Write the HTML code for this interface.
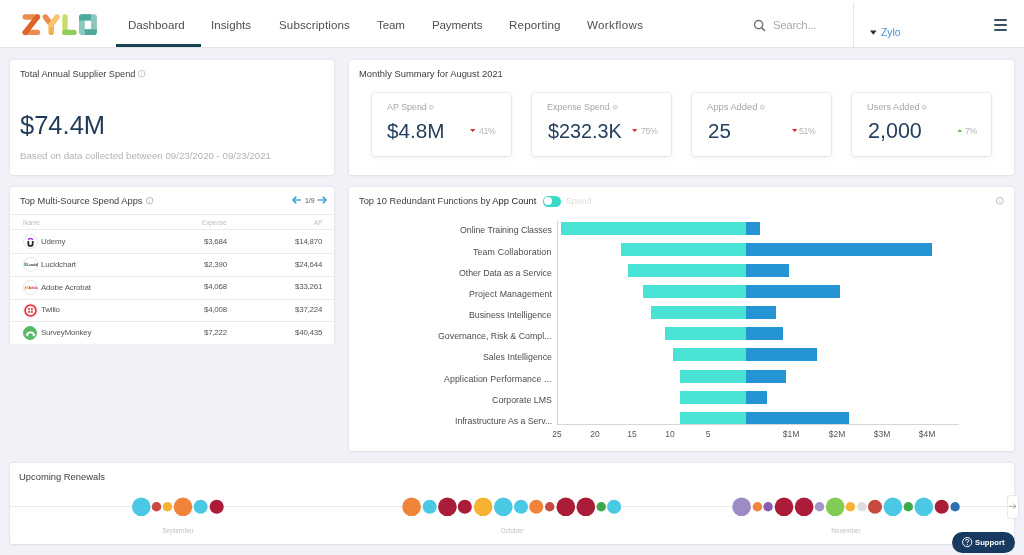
<!DOCTYPE html>
<html><head><meta charset="utf-8"><style>
html,body{margin:0;padding:0;width:1024px;height:555px;overflow:hidden;background:#f0f2f7;position:relative}
body{font-family:"Liberation Sans",sans-serif}
.t{position:absolute;white-space:nowrap;line-height:1;will-change:transform}
</style></head><body>
<div style="position:absolute;left:0px;top:0px;width:1024px;height:47px;background:#fff"></div>
<div style="position:absolute;left:0px;top:47px;width:1024px;height:1px;background:#e2e3e6"></div>
<div style="position:absolute;left:0px;top:48px;width:1024px;height:1px;background:#eceef2"></div>
<svg style="position:absolute;left:0;top:0" width="110" height="47" viewBox="0 0 110 47">
<g stroke-linecap="round" stroke-width="5.4" fill="none">
<line x1="25.3" y1="17" x2="37.4" y2="17" stroke="#e98c4e"/>
<line x1="25.3" y1="32.4" x2="37.4" y2="32.4" stroke="#e98c4e"/>
<line x1="37.4" y1="17" x2="25.3" y2="32.4" stroke="#de6428"/>
<line x1="45.4" y1="17" x2="51.2" y2="24.6" stroke="#e98c4e"/>
<line x1="51.2" y1="24.6" x2="51.2" y2="32.4" stroke="#f1b34c"/>
<line x1="57" y1="17" x2="51.2" y2="24.6" stroke="#f5c56d"/>
<line x1="65" y1="17" x2="65" y2="32.4" stroke="#cadd6c"/>
<line x1="65" y1="32.4" x2="74" y2="32.4" stroke="#8fcd5c"/>
</g>
<path fill-rule="evenodd" d="M79 17.4 Q79 14.3 82.1 14.3 L93.8 14.3 Q96.9 14.3 96.9 17.4 L96.9 31.9 Q96.9 35 93.8 35 L82.1 35 Q79 35 79 31.9 Z M84.8 20.5 L84.8 29.2 L91.1 29.2 L91.1 20.5 Z" fill="#8cc7bd"/>
<path d="M79 17.4 Q79 14.3 82.1 14.3 L91.1 14.3 L91.1 20.5 L79 20.5 Z" fill="#4eaa9e"/>

<path d="M84.8 29.2 L96.9 29.2 L96.9 31.9 Q96.9 35 93.8 35 L84.8 35 Z" fill="#4eaa9e"/>

</svg>
<div class="t" style="left:128.10px;top:19.24px;font-size:11.6px;color:#4f4f4f;font-weight:400;letter-spacing:0px">Dashboard</div>
<div class="t" style="left:211.40px;top:19.24px;font-size:11.6px;color:#4f4f4f;font-weight:400;letter-spacing:0.03px">Insights</div>
<div class="t" style="left:279.20px;top:19.24px;font-size:11.6px;color:#4f4f4f;font-weight:400;letter-spacing:0.1px">Subscriptions</div>
<div class="t" style="left:377.00px;top:19.24px;font-size:11.6px;color:#4f4f4f;font-weight:400;letter-spacing:-0.17px">Team</div>
<div class="t" style="left:431.70px;top:19.24px;font-size:11.6px;color:#4f4f4f;font-weight:400;letter-spacing:-0.16px">Payments</div>
<div class="t" style="left:509.00px;top:19.24px;font-size:11.6px;color:#4f4f4f;font-weight:400;letter-spacing:0.16px">Reporting</div>
<div class="t" style="left:587.10px;top:19.24px;font-size:11.6px;color:#4f4f4f;font-weight:400;letter-spacing:0.34px">Workflows</div>
<div style="position:absolute;left:116px;top:44px;width:85px;height:3px;background:#164452"></div>
<svg style="position:absolute;left:750px;top:17px" width="20" height="18" viewBox="0 0 20 18">
<circle cx="8.6" cy="7.6" r="4.1" fill="none" stroke="#707070" stroke-width="1.4"/>
<line x1="11.6" y1="10.6" x2="14.4" y2="13.4" stroke="#707070" stroke-width="1.5" stroke-linecap="round"/>
</svg>
<div class="t" style="left:772.70px;top:20.31px;font-size:11.4px;color:#a9a9a9;font-weight:400;letter-spacing:-0.28px">Search...</div>
<div style="position:absolute;left:852.5px;top:2px;width:1px;height:45px;background:#e6e6e9"></div>
<svg style="position:absolute;left:869px;top:30px" width="9" height="6" viewBox="0 0 9 6"><path d="M1 0.6 L7.6 0.6 L4.3 4.8 Z" fill="#1e3446"/></svg>
<div class="t" style="left:880.80px;top:27.76px;font-size:10.4px;color:#4692d2;font-weight:400;">Zylo</div>
<div style="position:absolute;left:993.6px;top:19.4px;width:13.3px;height:1.8px;background:#3a5163;border-radius:1px"></div>
<div style="position:absolute;left:993.6px;top:24.4px;width:13.3px;height:1.8px;background:#3a5163;border-radius:1px"></div>
<div style="position:absolute;left:993.6px;top:29.4px;width:13.3px;height:1.8px;background:#3a5163;border-radius:1px"></div>
<div style="position:absolute;left:10px;top:60px;width:324px;height:115px;background:#fff;border-radius:2px;box-shadow:0 0 1.5px rgba(0,0,0,0.16), 0 1px 3px rgba(0,0,0,0.05)"></div>
<div style="position:absolute;left:349px;top:60px;width:665px;height:115px;background:#fff;border-radius:2px;box-shadow:0 0 1.5px rgba(0,0,0,0.16), 0 1px 3px rgba(0,0,0,0.05)"></div>
<div style="position:absolute;left:10px;top:187px;width:324px;height:156.6px;background:#fff;border-radius:2px;box-shadow:0 0 1.5px rgba(0,0,0,0.16), 0 1px 3px rgba(0,0,0,0.05);border-radius:2px 2px 0 0"></div>
<div style="position:absolute;left:9px;top:343.6px;width:327px;height:4px;background:#f0f2f7"></div>
<div style="position:absolute;left:349px;top:187px;width:665px;height:264px;background:#fff;border-radius:2px;box-shadow:0 0 1.5px rgba(0,0,0,0.16), 0 1px 3px rgba(0,0,0,0.05)"></div>
<div style="position:absolute;left:10px;top:462.6px;width:1004px;height:81.6px;background:#fff;border-radius:2px;box-shadow:0 0 1.5px rgba(0,0,0,0.16), 0 1px 3px rgba(0,0,0,0.05)"></div>
<div class="t" style="left:20.00px;top:69.78px;font-size:9.2px;color:#3d3d3d;font-weight:400;">Total Annual Supplier Spend</div>
<svg style="position:absolute;left:137.20px;top:69.30px" width="9.40" height="9.40" viewBox="0 0 9.40 9.40"><circle cx="4.70" cy="4.70" r="3.30" fill="none" stroke="#b5b5b5" stroke-width="0.8"/><line x1="4.70" y1="4.52" x2="4.70" y2="6.55" stroke="#b5b5b5" stroke-width="0.8" opacity="0.6"/><circle cx="4.70" cy="3.29" r="0.44" fill="#b5b5b5" opacity="0.6"/></svg>
<div class="t" style="left:20.40px;top:112.92px;font-size:25.5px;color:#1f3a56;font-weight:400;">$74.4M</div>
<div class="t" style="left:19.60px;top:151.16px;font-size:9.7px;color:#b3b3b3;font-weight:400;">Based on data collected between 09/23/2020 - 09/23/2021</div>
<div class="t" style="left:358.90px;top:69.41px;font-size:9.4px;color:#3d3d3d;font-weight:400;">Monthly Summary for August 2021</div>
<div style="position:absolute;left:372.2px;top:93px;width:138.6px;height:63.2px;background:#fff;border-radius:2.5px;box-shadow:0 0 2px rgba(0,0,0,0.2), 0 1px 4px rgba(0,0,0,0.08)"></div>
<div class="t" style="left:386.80px;top:103.44px;font-size:8.9px;color:#a6a6a6;font-weight:400;">AP Spend</div>
<div style="position:absolute;left:532.2px;top:93px;width:138.6px;height:63.2px;background:#fff;border-radius:2.5px;box-shadow:0 0 2px rgba(0,0,0,0.2), 0 1px 4px rgba(0,0,0,0.08)"></div>
<div class="t" style="left:546.80px;top:103.44px;font-size:8.9px;color:#a6a6a6;font-weight:400;">Expense Spend</div>
<div style="position:absolute;left:692.2px;top:93px;width:138.6px;height:63.2px;background:#fff;border-radius:2.5px;box-shadow:0 0 2px rgba(0,0,0,0.2), 0 1px 4px rgba(0,0,0,0.08)"></div>
<div class="t" style="left:706.80px;top:103.05px;font-size:9.35px;color:#a6a6a6;font-weight:400;">Apps Added</div>
<div style="position:absolute;left:852.2px;top:93px;width:138.6px;height:63.2px;background:#fff;border-radius:2.5px;box-shadow:0 0 2px rgba(0,0,0,0.2), 0 1px 4px rgba(0,0,0,0.08)"></div>
<div class="t" style="left:866.80px;top:103.18px;font-size:9.2px;color:#a6a6a6;font-weight:400;">Users Added</div>
<svg style="position:absolute;left:427.60px;top:104.10px" width="6.60" height="6.60" viewBox="0 0 6.60 6.60"><circle cx="3.30" cy="3.30" r="1.95" fill="none" stroke="#b0b0b0" stroke-width="0.7"/><line x1="3.30" y1="3.18" x2="3.30" y2="4.45" stroke="#b0b0b0" stroke-width="0.7" opacity="0.6"/><circle cx="3.30" cy="2.43" r="0.39" fill="#b0b0b0" opacity="0.6"/></svg>
<svg style="position:absolute;left:612.20px;top:104.10px" width="6.60" height="6.60" viewBox="0 0 6.60 6.60"><circle cx="3.30" cy="3.30" r="1.95" fill="none" stroke="#b0b0b0" stroke-width="0.7"/><line x1="3.30" y1="3.18" x2="3.30" y2="4.45" stroke="#b0b0b0" stroke-width="0.7" opacity="0.6"/><circle cx="3.30" cy="2.43" r="0.39" fill="#b0b0b0" opacity="0.6"/></svg>
<svg style="position:absolute;left:759.20px;top:104.10px" width="6.60" height="6.60" viewBox="0 0 6.60 6.60"><circle cx="3.30" cy="3.30" r="1.95" fill="none" stroke="#b0b0b0" stroke-width="0.7"/><line x1="3.30" y1="3.18" x2="3.30" y2="4.45" stroke="#b0b0b0" stroke-width="0.7" opacity="0.6"/><circle cx="3.30" cy="2.43" r="0.39" fill="#b0b0b0" opacity="0.6"/></svg>
<svg style="position:absolute;left:921.20px;top:104.10px" width="6.60" height="6.60" viewBox="0 0 6.60 6.60"><circle cx="3.30" cy="3.30" r="1.95" fill="none" stroke="#b0b0b0" stroke-width="0.7"/><line x1="3.30" y1="3.18" x2="3.30" y2="4.45" stroke="#b0b0b0" stroke-width="0.7" opacity="0.6"/><circle cx="3.30" cy="2.43" r="0.39" fill="#b0b0b0" opacity="0.6"/></svg>
<div class="t" style="left:387.30px;top:120.81px;font-size:20.7px;color:#24405e;font-weight:400;">$4.8M</div>
<div class="t" style="left:548.10px;top:121.57px;font-size:19.8px;color:#24405e;font-weight:400;">$232.3K</div>
<div class="t" style="left:707.90px;top:120.98px;font-size:20.5px;color:#24405e;font-weight:400;">25</div>
<div class="t" style="left:868.10px;top:121.32px;font-size:21.5px;color:#24405e;font-weight:400;">2,000</div>
<svg style="position:absolute;left:470.1px;top:128.8px" width="5.4" height="3.1" viewBox="0 0 5.4 3.1"><path d="M0 0 L5.4 0 L2.7 3.1 Z" fill="#d0343a"/></svg>
<svg style="position:absolute;left:632.3px;top:128.8px" width="5.4" height="3.1" viewBox="0 0 5.4 3.1"><path d="M0 0 L5.4 0 L2.7 3.1 Z" fill="#d0343a"/></svg>
<svg style="position:absolute;left:791.6px;top:128.8px" width="5.4" height="3.1" viewBox="0 0 5.4 3.1"><path d="M0 0 L5.4 0 L2.7 3.1 Z" fill="#d0343a"/></svg>
<svg style="position:absolute;left:956.6px;top:128.9px" width="5.6" height="3.2" viewBox="0 0 5.6 3.2"><path d="M0 3.2 L5.6 3.2 L2.8 0 Z" fill="#6cc84a"/></svg>
<div class="t" style="left:478.60px;top:127.20px;font-size:8.7px;color:#b4b4b4;font-weight:400;letter-spacing:-0.35px">41%</div>
<div class="t" style="left:641.00px;top:127.20px;font-size:8.7px;color:#b4b4b4;font-weight:400;letter-spacing:-0.35px">75%</div>
<div class="t" style="left:799.00px;top:127.20px;font-size:8.7px;color:#b4b4b4;font-weight:400;letter-spacing:-0.35px">51%</div>
<div class="t" style="left:964.90px;top:127.20px;font-size:8.7px;color:#b4b4b4;font-weight:400;letter-spacing:-0.3px">7%</div>
<div class="t" style="left:19.70px;top:196.79px;font-size:9.3px;color:#3d3d3d;font-weight:400;">Top Multi-Source Spend Apps</div>
<svg style="position:absolute;left:144.50px;top:196.40px" width="9.40" height="9.40" viewBox="0 0 9.40 9.40"><circle cx="4.70" cy="4.70" r="3.30" fill="none" stroke="#a5a5a5" stroke-width="0.8"/><line x1="4.70" y1="4.52" x2="4.70" y2="6.55" stroke="#a5a5a5" stroke-width="0.8" opacity="0.6"/><circle cx="4.70" cy="3.29" r="0.44" fill="#a5a5a5" opacity="0.6"/></svg>
<div style="position:absolute;left:10px;top:214px;width:324px;height:1px;background:#ececef"></div>
<div style="position:absolute;left:10px;top:229px;width:324px;height:1px;background:#ececef"></div>
<div style="position:absolute;left:10px;top:252.5px;width:324px;height:1px;background:#ececef"></div>
<div style="position:absolute;left:10px;top:275.5px;width:324px;height:1px;background:#ececef"></div>
<div style="position:absolute;left:10px;top:298.5px;width:324px;height:1px;background:#ececef"></div>
<div style="position:absolute;left:10px;top:321.3px;width:324px;height:1px;background:#ececef"></div>
<div class="t" style="left:23.30px;top:219.65px;font-size:6.3px;color:#bdbdbd;font-weight:400;">Name</div>
<div class="t" style="right:797.40px;top:219.65px;font-size:6.3px;color:#bdbdbd;font-weight:400;">Expense</div>
<div class="t" style="right:702.00px;top:219.65px;font-size:6.3px;color:#bdbdbd;font-weight:400;">AP</div>
<div class="t" style="left:41.30px;top:238.19px;font-size:7.9px;color:#555;font-weight:400;letter-spacing:-0.15px">Udemy</div>
<div class="t" style="right:797.00px;top:237.78px;font-size:7.9px;color:#555;font-weight:400;letter-spacing:-0.2px">$3,684</div>
<div class="t" style="right:701.80px;top:237.78px;font-size:7.9px;color:#555;font-weight:400;letter-spacing:-0.2px">$14,870</div>
<div class="t" style="left:41.30px;top:260.94px;font-size:7.9px;color:#555;font-weight:400;letter-spacing:-0.15px">Lucidchart</div>
<div class="t" style="right:797.00px;top:260.54px;font-size:7.9px;color:#555;font-weight:400;letter-spacing:-0.2px">$2,390</div>
<div class="t" style="right:701.80px;top:260.54px;font-size:7.9px;color:#555;font-weight:400;letter-spacing:-0.2px">$24,644</div>
<div class="t" style="left:41.30px;top:283.69px;font-size:7.9px;color:#555;font-weight:400;letter-spacing:-0.15px">Adobe Acrobat</div>
<div class="t" style="right:797.00px;top:283.29px;font-size:7.9px;color:#555;font-weight:400;letter-spacing:-0.2px">$4,068</div>
<div class="t" style="right:701.80px;top:283.29px;font-size:7.9px;color:#555;font-weight:400;letter-spacing:-0.2px">$33,261</div>
<div class="t" style="left:41.30px;top:306.44px;font-size:7.9px;color:#555;font-weight:400;letter-spacing:-0.15px">Twilio</div>
<div class="t" style="right:797.00px;top:306.04px;font-size:7.9px;color:#555;font-weight:400;letter-spacing:-0.2px">$4,008</div>
<div class="t" style="right:701.80px;top:306.04px;font-size:7.9px;color:#555;font-weight:400;letter-spacing:-0.2px">$37,224</div>
<div class="t" style="left:41.30px;top:329.19px;font-size:7.9px;color:#555;font-weight:400;letter-spacing:-0.15px">SurveyMonkey</div>
<div class="t" style="right:797.00px;top:328.79px;font-size:7.9px;color:#555;font-weight:400;letter-spacing:-0.2px">$7,222</div>
<div class="t" style="right:701.80px;top:328.79px;font-size:7.9px;color:#555;font-weight:400;letter-spacing:-0.2px">$40,435</div>
<svg style="position:absolute;left:291px;top:195px" width="38" height="11" viewBox="0 0 38 11"><g fill="none" stroke-linejoin="round"><path d="M3 5 L9.9 5" stroke="#5fb0e2" stroke-width="1.7"/><path d="M4.8 2.2 L1.9 5 L4.8 7.8" stroke="#3a9fdc" stroke-width="1.6" stroke-linecap="round"/><path d="M26.6 5 L34 5" stroke="#5fb0e2" stroke-width="1.7"/><path d="M32.2 2.2 L35.1 5 L32.2 7.8" stroke="#3a9fdc" stroke-width="1.6" stroke-linecap="round"/></g></svg>
<div class="t" style="left:304.60px;top:197.94px;font-size:6.9px;color:#555;font-weight:400;">1/9</div>
<div style="position:absolute;border-radius:50%;box-sizing:border-box;left:22.50px;top:234.10px;width:15px;height:15px;background:#fff;border:0.8px solid #e6e6e6"></div>
<svg style="position:absolute;left:22.5px;top:234.10px" width="15" height="15" viewBox="0 0 15 15"><path d="M5.3 7.1 V9.9 Q5.3 11.9 7.5 11.9 Q9.7 11.9 9.7 9.9 V7.1" fill="none" stroke="#2b2b2b" stroke-width="1.8"/><path d="M5.1 5.6 Q7.5 3.4 9.9 5.6" fill="none" stroke="#a435f0" stroke-width="1.5"/></svg>
<div style="position:absolute;border-radius:50%;box-sizing:border-box;left:22.50px;top:257.10px;width:15px;height:15px;background:#fff;border:0.8px solid #e6e6e6"></div>
<svg style="position:absolute;left:22.5px;top:257.10px" width="15" height="15" viewBox="0 0 15 15"><rect x="1.2" y="5.6" width="2" height="3.4" fill="#4fb0e8"/><text x="3.6" y="9.2" font-family="Liberation Sans" font-size="4.2" font-weight="700" fill="#2c2c3c">Lucid</text></svg>
<div style="position:absolute;border-radius:50%;box-sizing:border-box;left:22.50px;top:279.90px;width:15px;height:15px;background:#fff;border:0.8px solid #e6e6e6"></div>
<svg style="position:absolute;left:22.5px;top:279.90px" width="15" height="15" viewBox="0 0 15 15"><text x="1.4" y="9.1" font-family="Liberation Sans" font-size="3.6" font-weight="700" fill="#e23a2e">ƒ/ Adobe</text></svg>
<div style="position:absolute;border-radius:50%;box-sizing:border-box;left:22.50px;top:302.50px;width:15px;height:15px;background:#fff;border:0.8px solid #eeeeee"></div>
<svg style="position:absolute;left:22.5px;top:302.50px" width="15" height="15" viewBox="0 0 15 15"><circle cx="7.5" cy="7.5" r="5.4" fill="none" stroke="#e8333d" stroke-width="1.7"/><circle cx="6.1" cy="6.1" r="1.05" fill="#e8333d"/><circle cx="8.9" cy="6.1" r="1.05" fill="#e8333d"/><circle cx="6.1" cy="8.9" r="1.05" fill="#e8333d"/><circle cx="8.9" cy="8.9" r="1.05" fill="#e8333d"/></svg>
<div style="position:absolute;border-radius:50%;box-sizing:border-box;left:22.80px;top:326.00px;width:14.4px;height:14.4px;background:#58b868;border:0.8px solid #58b868"></div>
<svg style="position:absolute;left:22.5px;top:325.70px" width="15" height="15" viewBox="0 0 15 15"><path d="M3.2 9.0 Q7.5 3.4 11.8 9.0" fill="none" stroke="#fff" stroke-width="1.9"/><rect x="3.6" y="8.6" width="1.8" height="1.6" fill="#fff"/><rect x="9.6" y="8.6" width="1.8" height="1.6" fill="#fff"/></svg>
<div class="t" style="left:359.40px;top:196.69px;font-size:9.3px;color:#3d3d3d;font-weight:400;">Top 10 Redundant Functions by <span style="color:#262626">App Count</span></div>
<div style="position:absolute;left:542.6px;top:196.2px;width:18.4px;height:10.6px;background:#3bdac7;border-radius:5.3px"></div>
<div style="position:absolute;left:543.9px;top:197.4px;width:8.1px;height:8.1px;background:#fff;border-radius:50%"></div>
<div class="t" style="left:565.80px;top:197.12px;font-size:8.8px;color:#e0e0e0;font-weight:400;">Spend</div>
<svg style="position:absolute;left:995.00px;top:195.80px" width="9.60" height="9.60" viewBox="0 0 9.60 9.60"><circle cx="4.80" cy="4.80" r="3.40" fill="none" stroke="#b0b0b0" stroke-width="0.8"/><line x1="4.80" y1="4.61" x2="4.80" y2="6.70" stroke="#b0b0b0" stroke-width="0.8" opacity="0.6"/><circle cx="4.80" cy="3.36" r="0.44" fill="#b0b0b0" opacity="0.6"/></svg>
<div style="position:absolute;left:561.0px;top:221.5px;width:186.5px;height:13px;background:#49e3d5"></div>
<div style="position:absolute;left:746px;top:221.5px;width:14.200000000000045px;height:13px;background:#2594d3"></div>
<div class="t" style="right:472.34px;top:226.42px;font-size:8.8px;color:#4d4d4d;font-weight:400;letter-spacing:-0.045px">Online Training Classes</div>
<div style="position:absolute;left:620.5px;top:242.5px;width:127.0px;height:13px;background:#49e3d5"></div>
<div style="position:absolute;left:746px;top:242.5px;width:185.60000000000002px;height:13px;background:#2594d3"></div>
<div class="t" style="right:472.15px;top:247.58px;font-size:8.8px;color:#4d4d4d;font-weight:400;letter-spacing:0.147px">Team Collaboration</div>
<div style="position:absolute;left:628.0px;top:264.0px;width:119.5px;height:13px;background:#49e3d5"></div>
<div style="position:absolute;left:746px;top:264.0px;width:43.0px;height:13px;background:#2594d3"></div>
<div class="t" style="right:472.35px;top:268.74px;font-size:8.8px;color:#4d4d4d;font-weight:400;letter-spacing:-0.05px">Other Data as a Service</div>
<div style="position:absolute;left:642.5px;top:285.0px;width:105.0px;height:13px;background:#49e3d5"></div>
<div style="position:absolute;left:746px;top:285.0px;width:93.79999999999995px;height:13px;background:#2594d3"></div>
<div class="t" style="right:472.19px;top:289.90px;font-size:8.8px;color:#4d4d4d;font-weight:400;letter-spacing:0.106px">Project Management</div>
<div style="position:absolute;left:650.5px;top:306.0px;width:97.0px;height:13px;background:#49e3d5"></div>
<div style="position:absolute;left:746px;top:306.0px;width:30.200000000000045px;height:13px;background:#2594d3"></div>
<div class="t" style="right:472.31px;top:311.06px;font-size:8.8px;color:#4d4d4d;font-weight:400;letter-spacing:-0.015px">Business Intelligence</div>
<div style="position:absolute;left:665.0px;top:327.0px;width:82.5px;height:13px;background:#49e3d5"></div>
<div style="position:absolute;left:746px;top:327.0px;width:37.200000000000045px;height:13px;background:#2594d3"></div>
<div class="t" style="right:472.30px;top:332.22px;font-size:8.8px;color:#4d4d4d;font-weight:400;letter-spacing:0px">Governance, Risk &amp; Compl...</div>
<div style="position:absolute;left:672.5px;top:348.0px;width:75.0px;height:13px;background:#49e3d5"></div>
<div style="position:absolute;left:746px;top:348.0px;width:70.79999999999995px;height:13px;background:#2594d3"></div>
<div class="t" style="right:472.30px;top:353.38px;font-size:8.8px;color:#4d4d4d;font-weight:400;letter-spacing:0px">Sales Intelligence</div>
<div style="position:absolute;left:679.5px;top:369.5px;width:68.0px;height:13px;background:#49e3d5"></div>
<div style="position:absolute;left:746px;top:369.5px;width:40.0px;height:13px;background:#2594d3"></div>
<div class="t" style="right:472.23px;top:374.54px;font-size:8.8px;color:#4d4d4d;font-weight:400;letter-spacing:0.073px">Application Performance ...</div>
<div style="position:absolute;left:679.5px;top:390.5px;width:68.0px;height:13px;background:#49e3d5"></div>
<div style="position:absolute;left:746px;top:390.5px;width:20.799999999999955px;height:13px;background:#2594d3"></div>
<div class="t" style="right:472.27px;top:395.70px;font-size:8.8px;color:#4d4d4d;font-weight:400;letter-spacing:0.025px">Corporate LMS</div>
<div style="position:absolute;left:679.5px;top:411.5px;width:68.0px;height:13px;background:#49e3d5"></div>
<div style="position:absolute;left:746px;top:411.5px;width:102.79999999999995px;height:13px;background:#2594d3"></div>
<div class="t" style="right:472.36px;top:416.86px;font-size:8.8px;color:#4d4d4d;font-weight:400;letter-spacing:-0.056px">Infrastructure As a Serv...</div>
<div style="position:absolute;left:557px;top:221px;width:1px;height:203.5px;background:#cfcfcf"></div>
<div style="position:absolute;left:557px;top:423.8px;width:402px;height:1px;background:#d6d6d6"></div>
<div class="t" style="left:357.00px;width:400px;text-align:center;top:430.17px;font-size:8.5px;color:#555;font-weight:400;">25</div>
<div class="t" style="left:394.90px;width:400px;text-align:center;top:430.17px;font-size:8.5px;color:#555;font-weight:400;">20</div>
<div class="t" style="left:432.00px;width:400px;text-align:center;top:430.17px;font-size:8.5px;color:#555;font-weight:400;">15</div>
<div class="t" style="left:470.30px;width:400px;text-align:center;top:430.17px;font-size:8.5px;color:#555;font-weight:400;">10</div>
<div class="t" style="left:508.20px;width:400px;text-align:center;top:430.17px;font-size:8.5px;color:#555;font-weight:400;">5</div>
<div class="t" style="left:591.40px;width:400px;text-align:center;top:430.17px;font-size:8.5px;color:#555;font-weight:400;">$1M</div>
<div class="t" style="left:637.10px;width:400px;text-align:center;top:430.17px;font-size:8.5px;color:#555;font-weight:400;">$2M</div>
<div class="t" style="left:682.00px;width:400px;text-align:center;top:430.17px;font-size:8.5px;color:#555;font-weight:400;">$3M</div>
<div class="t" style="left:727.30px;width:400px;text-align:center;top:430.17px;font-size:8.5px;color:#555;font-weight:400;">$4M</div>
<div class="t" style="left:19.40px;top:472.21px;font-size:9.4px;color:#3d3d3d;font-weight:400;">Upcoming Renewals</div>
<div style="position:absolute;left:10px;top:506px;width:1004px;height:1px;background:#e9e9ec"></div>
<svg style="position:absolute;left:0;top:490px" width="1024" height="34" viewBox="0 490 1024 34"><circle cx="141.3" cy="506.8" r="9.3" fill="#4bc8e3"/><circle cx="156.5" cy="506.8" r="4.7" fill="#c9493e"/><circle cx="167.5" cy="506.8" r="4.7" fill="#f6b232"/><circle cx="183" cy="506.8" r="9.3" fill="#f0843a"/><circle cx="200.6" cy="506.8" r="7.0" fill="#4bc8e3"/><circle cx="216.7" cy="506.8" r="7.0" fill="#ab1c38"/><circle cx="411.6" cy="506.8" r="9.3" fill="#f0843a"/><circle cx="429.7" cy="506.8" r="7.0" fill="#4bc8e3"/><circle cx="447.4" cy="506.8" r="9.3" fill="#ab1c38"/><circle cx="464.8" cy="506.8" r="7.0" fill="#ab1c38"/><circle cx="483.1" cy="506.8" r="9.3" fill="#f6b232"/><circle cx="503.3" cy="506.8" r="9.3" fill="#4bc8e3"/><circle cx="521" cy="506.8" r="7.0" fill="#4bc8e3"/><circle cx="536.3" cy="506.8" r="7.0" fill="#f0843a"/><circle cx="549.7" cy="506.8" r="4.7" fill="#c9493e"/><circle cx="565.8" cy="506.8" r="9.3" fill="#ab1c38"/><circle cx="585.8" cy="506.8" r="9.3" fill="#ab1c38"/><circle cx="601.2" cy="506.8" r="4.7" fill="#3ea94b"/><circle cx="614.1" cy="506.8" r="7.0" fill="#4bc8e3"/><circle cx="741.6" cy="506.8" r="9.3" fill="#9d8bc5"/><circle cx="757.4" cy="506.8" r="4.7" fill="#f0843a"/><circle cx="768.1" cy="506.8" r="4.7" fill="#8a5daf"/><circle cx="784" cy="506.8" r="9.3" fill="#ab1c38"/><circle cx="804.1" cy="506.8" r="9.3" fill="#ab1c38"/><circle cx="819.5" cy="506.8" r="4.7" fill="#a394ca"/><circle cx="835.2" cy="506.8" r="9.3" fill="#83cc53"/><circle cx="850.4" cy="506.8" r="4.7" fill="#f6b232"/><circle cx="861.9" cy="506.8" r="4.7" fill="#dedede"/><circle cx="875" cy="506.8" r="7.0" fill="#c9493e"/><circle cx="892.9" cy="506.8" r="9.3" fill="#4bc8e3"/><circle cx="908.3" cy="506.8" r="4.7" fill="#3ea94b"/><circle cx="923.8" cy="506.8" r="9.3" fill="#4bc8e3"/><circle cx="941.7" cy="506.8" r="7.0" fill="#ab1c38"/><circle cx="955.1" cy="506.8" r="4.7" fill="#2b70b5"/></svg>
<div class="t" style="left:-22.40px;width:400px;text-align:center;top:527.86px;font-size:6.4px;color:#c2c2c2;font-weight:400;">September</div>
<div class="t" style="left:311.90px;width:400px;text-align:center;top:527.86px;font-size:6.4px;color:#c2c2c2;font-weight:400;">October</div>
<div class="t" style="left:646.20px;width:400px;text-align:center;top:527.86px;font-size:6.4px;color:#c2c2c2;font-weight:400;">November</div>
<div style="position:absolute;left:1007.8px;top:495.5px;width:10px;height:22.2px;background:#fff;border-radius:2px;box-shadow:0 0 0 0.8px #e3e4e7,0 1px 2px rgba(0,0,0,0.06)"></div>
<svg style="position:absolute;left:1007px;top:501px" width="11" height="11" viewBox="0 0 11 11"><g stroke="#9a9a9a" stroke-width="0.9" fill="none"><path d="M2 5.4 H9 M6.4 2.8 L9 5.4 L6.4 8"/></g></svg>
<div style="position:absolute;left:952.2px;top:531.6px;width:63.2px;height:21.1px;background:#173a5e;border-radius:10.5px"></div>
<svg style="position:absolute;left:961px;top:536px" width="12" height="12" viewBox="0 0 12 12"><circle cx="6.2" cy="6.1" r="4.6" fill="none" stroke="#fff" stroke-width="1"/><path d="M4.6 4.9 Q4.6 3.4 6.2 3.4 Q7.8 3.4 7.8 4.8 Q7.8 5.7 6.2 6.3 V7.2" fill="none" stroke="#fff" stroke-width="1"/><circle cx="6.2" cy="8.6" r="0.6" fill="#fff"/></svg>
<div class="t" style="left:975.40px;top:538.56px;font-size:7.7px;color:#fff;font-weight:700;">Support</div>
</body></html>
